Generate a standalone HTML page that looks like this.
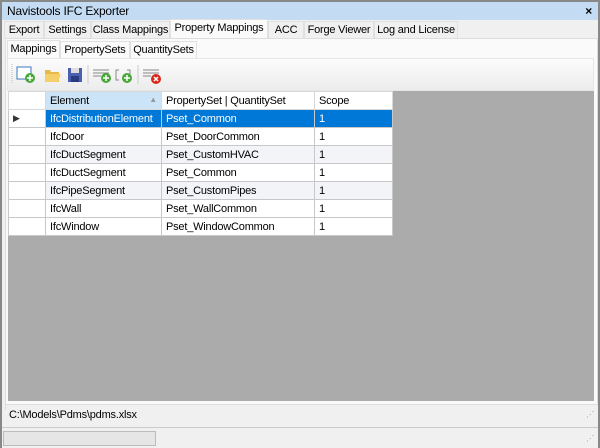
<!DOCTYPE html><html><head><style>
*{margin:0;padding:0;box-sizing:border-box}
body{width:600px;height:448px;background:#f0f0f0;font-family:"Liberation Sans",sans-serif;font-size:11px;letter-spacing:-0.2px;color:#000;position:relative;overflow:hidden}
.a{position:absolute}
.tab{position:absolute;top:21px;height:17px;line-height:17px;text-align:center;background:#f0f0f0;border:1px solid #e0e0e0;border-bottom:none;white-space:nowrap;overflow:hidden}
.st{position:absolute;top:41px;height:17px;line-height:17px;text-align:center;border:1px solid #e0e0e0;border-bottom:none;white-space:nowrap;overflow:hidden}
table{border-collapse:collapse;position:absolute;left:8px;top:91px;table-layout:fixed;width:384px}
td{height:18px;border:1px solid #c8c8c8;padding:0 4px;background:#fff;white-space:nowrap;overflow:hidden}
tr.h td{background:#fff;border-color:#d8d8d8}
tr.alt td{background:#f2f4f7}
tr.sel td{background:#0078d7;color:#fff}
</style></head><body>
<div class="a" style="left:0;top:0;width:600px;height:448px;border-left:2px solid #888;border-right:2px solid #888"></div>
<div class="a" style="left:2px;top:0;width:596px;height:20px;background:#c4dcf3;border-top:2px solid #888;line-height:18px;padding-left:5px;font-size:12px">Navistools IFC Exporter<span style="position:absolute;right:6px;font-weight:bold">×</span></div>
<div class="tab" style="left:4px;width:40px">Export</div>
<div class="tab" style="left:44px;width:47px">Settings</div>
<div class="tab" style="left:91px;width:79px">Class Mappings</div>
<div class="tab" style="left:170px;width:98px;top:19px;height:20px;background:#fafafa">Property Mappings</div>
<div class="tab" style="left:268px;width:36px">ACC</div>
<div class="tab" style="left:304px;width:70px">Forge Viewer</div>
<div class="tab" style="left:374px;width:84px">Log and License</div>
<div class="a" style="left:5px;top:38px;width:593px;height:372px;background:#fafafa;border:1px solid #ddd"></div>
<div class="st" style="left:7px;width:53px;top:40px;background:#fafafa;height:19px">Mappings</div>
<div class="st" style="left:60px;width:70px">PropertySets</div>
<div class="st" style="left:130px;width:67px">QuantitySets</div>
<div class="a" style="left:7px;top:58px;width:587px;height:33px;background:linear-gradient(#fcfcfc,#ececec);border:1px solid #e6e6e6"></div>
<svg class="a" style="left:10px;top:62px" width="160" height="24">
<line x1="2" y1="2" x2="2" y2="22" stroke="#bbb" stroke-dasharray="1,1"/>
<rect x="7" y="5" width="14" height="12" fill="#fff" stroke="#3a78c0"/><circle cx="20" cy="16" r="5" fill="#4aa83a"/><path d="M17 16h6M20 13v6" stroke="#fff" stroke-width="1.5"/>
<path d="M35 8h5l1 2h8v10h-14z" fill="#e8b84a"/><path d="M35 12h16l-3 8h-13z" fill="#f5cf6a"/>
<rect x="58" y="6" width="14" height="14" fill="#4a5fb0"/><rect x="61" y="6" width="8" height="5" fill="#ddd"/><rect x="61" y="14" width="8" height="6" fill="#2a3a80"/>
<line x1="78" y1="3" x2="78" y2="22" stroke="#ccc"/>
<path d="M83 8h16M83 11h16M83 14h8" stroke="#888"/><circle cx="96" cy="16" r="5" fill="#4aa83a"/><path d="M93 16h6M96 13v6" stroke="#fff" stroke-width="1.5"/>
<path d="M109 8h-3v10h3M117 8h3v10" stroke="#888" fill="none"/><circle cx="117" cy="16" r="5" fill="#4aa83a"/><path d="M114 16h6M117 13v6" stroke="#fff" stroke-width="1.5"/>
<line x1="128" y1="3" x2="128" y2="22" stroke="#ccc"/>
<path d="M133 8h16M133 11h16M133 14h8" stroke="#888"/><circle cx="146" cy="17" r="5" fill="#d8281e"/><path d="M144 15l4 4M148 15l-4 4" stroke="#fff" stroke-width="1.5"/>
</svg>
<div class="a" style="left:8px;top:91px;width:586px;height:310px;background:#ababab"></div>
<table>
<colgroup><col style="width:37px"><col style="width:116px"><col style="width:153px"><col style="width:78px"></colgroup>
<tr class="h"><td></td><td style="background:#cce4f7">Element<span style="float:right;color:#999;font-size:8px">▲</span></td><td>PropertySet | QuantitySet</td><td>Scope</td></tr>
<tr class="sel"><td style="background:#fff;color:#333;font-size:9px">▶</td><td>IfcDistributionElement</td><td>Pset_Common</td><td>1</td></tr>
<tr><td></td><td>IfcDoor</td><td>Pset_DoorCommon</td><td>1</td></tr>
<tr class="alt"><td style="background:#fff"></td><td>IfcDuctSegment</td><td>Pset_CustomHVAC</td><td>1</td></tr>
<tr><td></td><td>IfcDuctSegment</td><td>Pset_Common</td><td>1</td></tr>
<tr class="alt"><td style="background:#fff"></td><td>IfcPipeSegment</td><td>Pset_CustomPipes</td><td>1</td></tr>
<tr><td></td><td>IfcWall</td><td>Pset_WallCommon</td><td>1</td></tr>
<tr><td></td><td>IfcWindow</td><td>Pset_WindowCommon</td><td>1</td></tr>
</table>
<div class="a" style="left:6px;top:404px;width:592px;height:22px;background:#f0f0f0;border-top:1px solid #ddd;line-height:21px;padding-left:3px">C:\Models\Pdms\pdms.xlsx</div>
<div class="a" style="left:2px;top:427px;width:596px;height:1px;background:#ccc"></div>
<div class="a" style="left:3px;top:431px;width:153px;height:15px;background:#e6e6e6;border:1px solid #bcbcbc"></div>
<div class="a" style="right:6px;top:410px;color:#999;font-size:8px">⋰</div>
<div class="a" style="right:6px;top:434px;color:#999;font-size:8px">⋰</div>
</body></html>
